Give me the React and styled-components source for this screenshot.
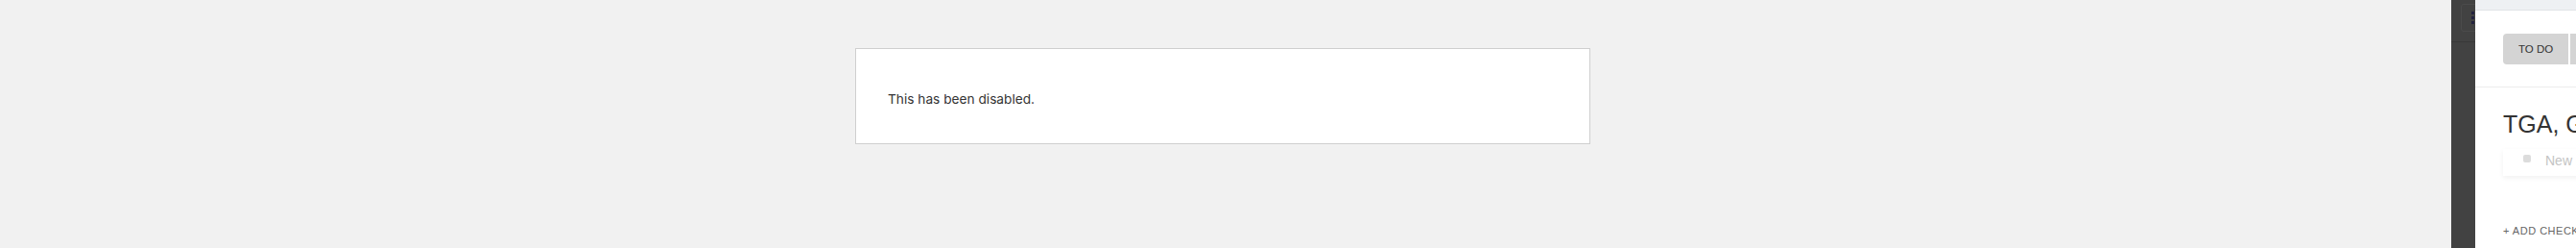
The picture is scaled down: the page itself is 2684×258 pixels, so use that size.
import React from "react"
import styled, {createGlobalStyle} from "styled-components"

const GlobalStyle = createGlobalStyle`
  html, body {
    margin:0;
    padding:0;
    background-color:#f1f1f1;
    font-family:"Inter", "Liberation Sans", sans-serif;
  }
`

export default function App() {
  return(
    <Page>
      <GlobalStyle />
      <MainArea>
        <NoticeBox>
          <NoticeText>This has been disabled.</NoticeText>
        </NoticeBox>
      </MainArea>
      <Overlay>
        <ShadedCard>
          <GripIcon width="6" height="14" viewBox="0 0 6 14">
            <rect x="0" y="0" width="3" height="3" />
            <rect x="0" y="5" width="3" height="3" />
            <rect x="0" y="10" width="3" height="3" />
          </GripIcon>
        </ShadedCard>
        <ShadedRule />
      </Overlay>
      <Drawer>
        <DrawerTopBand />
        <StatusBar>
          <StatusGroup>
            <StatusButton first>TO DO</StatusButton>
            <StatusButton>IN PROGRESS</StatusButton>
            <StatusButton last>DONE</StatusButton>
          </StatusGroup>
        </StatusBar>
        <DrawerBody>
          <TaskTitle>TGA, Gather requirements</TaskTitle>
          <ChecklistInput>
            <CheckSquare />
            <Placeholder>New checklist item</Placeholder>
          </ChecklistInput>
          <AddChecklist>+ ADD CHECKLIST ITEM</AddChecklist>
        </DrawerBody>
      </Drawer>
    </Page>
  )
}

const Page = styled.div`
  display:flex;
  width:100vw;
  height:100vh;
  overflow:hidden;
`

const MainArea = styled.div`
  flex:1;
  min-width:0;
  display:flex;
  justify-content:center;
  align-items:flex-start;
  padding-top:50px;
  padding-right:6px;
`

const NoticeBox = styled.div`
  width:766px;
  height:100px;
  box-sizing:border-box;
  background-color:white;
  border:1px solid #cfcfcf;
  padding:42px 33px 0 33px;
`

const NoticeText = styled.p`
  margin:0;
  font-size:13.7px;
  line-height:20px;
  color:#333;
`

const Overlay = styled.div`
  width:25px;
  flex-shrink:0;
  background-color:#424242;
  display:flex;
  flex-direction:column;
  overflow:hidden;
`

const ShadedCard = styled.div`
  margin:4px 0 0 10px;
  width:60px;
  height:29px;
  box-sizing:border-box;
  border:1px solid #4b4b4b;
  border-radius:3px;
  padding:7px 0 0 10px;
`

const GripIcon = styled.svg`
  display:block;
  fill:#23233f;
`

const ShadedRule = styled.div`
  margin-top:10px;
  height:1px;
  background-color:#393939;
`

const Drawer = styled.div`
  width:105px;
  flex-shrink:0;
  background-color:white;
  overflow:hidden;
  font-family:"Liberation Sans", Arial, sans-serif;
`

const DrawerTopBand = styled.div`
  height:10px;
  background-color:#eef0f3;
  border-bottom:1px solid #e1e3e7;
`

const StatusBar = styled.div`
  padding:24px 0 23px 29px;
  border-bottom:1px solid #ececec;
`

const StatusGroup = styled.div`
  display:flex;
  gap:2px;
  width:max-content;
`

const StatusButton = styled.div`
  height:32px;
  padding:0 16px;
  display:flex;
  align-items:center;
  background-color:#d4d4d4;
  color:#333;
  font-size:11.5px;
  white-space:nowrap;
  border-radius:${p => p.first ? "4px 0 0 4px" : p.last ? "0 4px 4px 0" : "0"};
`

const DrawerBody = styled.div`
  padding:23px 0 0 29px;
  width:max-content;
`

const TaskTitle = styled.h1`
  margin:0;
  font-size:25px;
  line-height:30px;
  font-weight:normal;
  color:#333;
  white-space:nowrap;
`

const ChecklistInput = styled.div`
  margin-top:11px;
  width:420px;
  display:flex;
  align-items:flex-start;
  gap:15px;
  padding:4px 0 8px 21px;
  background-color:white;
  box-shadow:0 2px 5px rgba(0,0,0,0.06);
`

const CheckSquare = styled.span`
  width:8px;
  height:8px;
  margin-top:2px;
  border-radius:2px;
  background-color:#dcdcdc;
`

const Placeholder = styled.span`
  font-size:14px;
  line-height:16px;
  color:#c4c4c4;
`

const AddChecklist = styled.div`
  margin-top:50px;
  font-size:11px;
  line-height:14px;
  letter-spacing:0.5px;
  color:#666;
  white-space:nowrap;
`
